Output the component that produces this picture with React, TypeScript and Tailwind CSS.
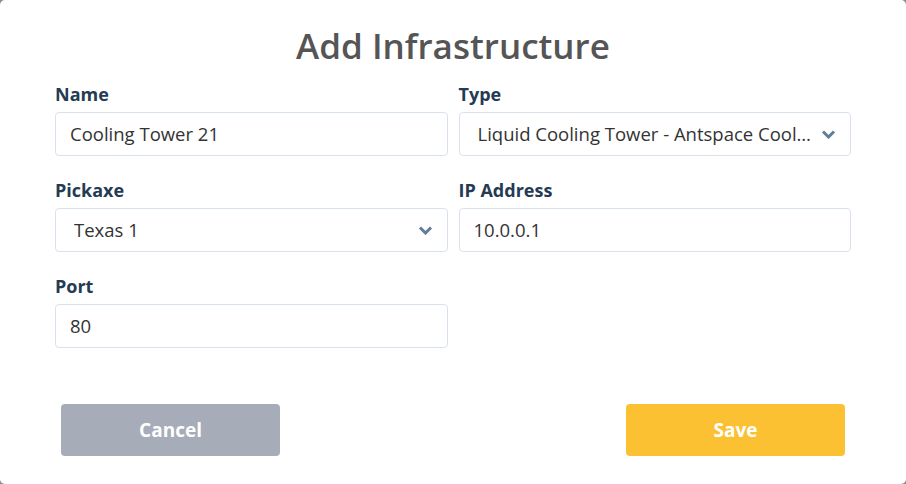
import React from 'react';

function Chevron() {
  return (
    <svg width="15" height="10" viewBox="0 0 15 10" className="shrink-0">
      <path d="M2 2.5 L7.5 8 L13 2.5" fill="none" stroke="#627d98" strokeWidth="3" strokeLinejoin="miter" />
    </svg>
  );
}

function TextField({ label, value }: { label: string; value: string }) {
  return (
    <div>
      <div className="mb-[6px] text-[18px] font-bold leading-[24px] text-[#243b53]">{label}</div>
      <div className="flex h-[44px] items-center rounded-[4px] border border-[#d9e2ec] px-[14px] text-[18.5px] text-[#333]">
        {value}
      </div>
    </div>
  );
}

function SelectField({ label, value }: { label: string; value: string }) {
  return (
    <div>
      <div className="mb-[6px] text-[18px] font-bold leading-[24px] text-[#243b53]">{label}</div>
      <div className="flex h-[44px] items-center gap-[6px] rounded-[4px] border border-[#d9e2ec] pl-[18px] pr-[14px] text-[18.5px] text-[#333]">
        <span className="min-w-0 flex-1 truncate">{value}</span>
        <Chevron />
      </div>
    </div>
  );
}

export default function App() {
  return (
    <div className="h-[484px] w-full bg-[#8c8c8c]" style={{ fontFamily: '"Open Sans", sans-serif' }}>
      <div className="h-full rounded-[5px] bg-white px-[55px] pt-[22px]">
        <h1 className="text-center text-[35px] font-semibold leading-[48px] text-[#555]">Add Infrastructure</h1>

        {/* Form */}
        <div className="mt-[12px] grid grid-cols-2 gap-x-[11px] gap-y-[22px]">
          <TextField label="Name" value="Cooling Tower 21" />
          <SelectField label="Type" value="Liquid Cooling Tower - Antspace Cooling Tower" />
          <SelectField label="Pickaxe" value="Texas 1" />
          <TextField label="IP Address" value="10.0.0.1" />
          <TextField label="Port" value="80" />
        </div>

        {/* Actions */}
        <div className="mt-[56px] flex justify-between px-[6px]">
          <button className="h-[52px] w-[219px] rounded-[4px] bg-[#a6adb9] text-[19px] font-bold text-white">Cancel</button>
          <button className="h-[52px] w-[219px] rounded-[4px] bg-[#fbc132] text-[19px] font-bold text-white">Save</button>
        </div>
      </div>
    </div>
  );
}
